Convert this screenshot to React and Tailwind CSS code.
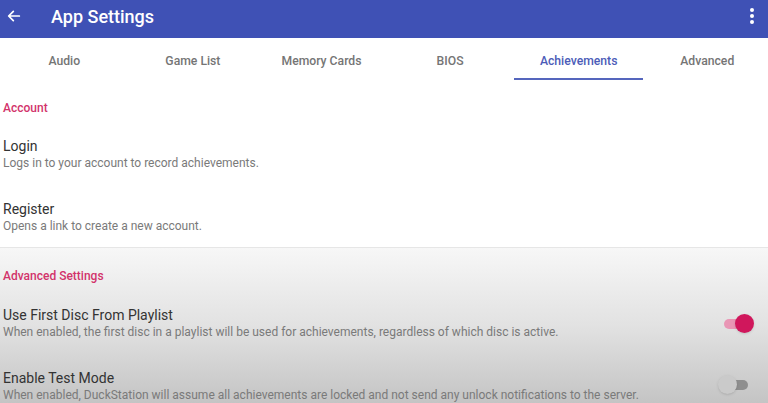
import React from 'react';

const tabs = ['Audio', 'Game List', 'Memory Cards', 'BIOS', 'Achievements', 'Advanced'];

function Toggle({ on }) {
    return (
        <div className="relative w-[24px] h-[20px] shrink-0">
            <div className={`absolute left-0 right-0 top-[5px] h-[10px] rounded-full ${on ? 'bg-[#e996b5]' : 'bg-[#8e8e8e]'}`}></div>
            <div className={`absolute top-0 w-[19px] h-[19px] rounded-full shadow-sm ${on ? 'right-[-6px] bg-[#d0175c]' : 'left-[-6px] bg-[#cacaca]'}`}></div>
        </div>
    );
}

function Pref({ title, summary, toggle, pt = 'pt-[22px]', tpt = 'pt-[30px]' }) {
    return (
        <div className="h-[63px] flex items-start justify-between pl-[3px] pr-[20px]">
            <div className={pt}>
                <div className="text-[14px] leading-[18px] text-[#333]">{title}</div>
                <div className="text-[12px] leading-[16px] text-[#7a7a7a]">{summary}</div>
            </div>
            {toggle !== undefined && (
                <div className={tpt}>
                    <Toggle on={toggle} />
                </div>
            )}
        </div>
    );
}

function Category({ label }) {
    return (
        <div className="pt-[20px] h-[37px] pl-[3px] text-[12px] leading-[16px] font-medium text-[#d2336b]">{label}</div>
    );
}

export default function App() {
    return (
        <div className="w-[768px] h-[403px] overflow-hidden bg-white font-['Roboto',sans-serif]">
            <div className="h-[38px] bg-[#3f51b5] flex items-center text-white">
                <svg width="16" height="16" viewBox="0 0 24 24" className="ml-[6px] mt-[-6px]" fill="none" stroke="white" strokeWidth="2.6" strokeLinecap="round" strokeLinejoin="round">
                    <path d="M20 12H5M11 5l-7 7 7 7" />
                </svg>
                <div className="ml-[29px] mt-[-6px] text-[18px] font-medium">App Settings</div>
                <div className="ml-auto mr-[14px] mt-[-6px] flex flex-col gap-[2px]">
                    <span className="w-[4px] h-[4px] rounded-full bg-white"></span>
                    <span className="w-[4px] h-[4px] rounded-full bg-white"></span>
                    <span className="w-[4px] h-[4px] rounded-full bg-white"></span>
                </div>
            </div>
            <div className="h-[42px] grid grid-cols-[repeat(6,128.6px)] bg-white">
                {tabs.map((t) => (
                    <div key={t} className={`flex items-center justify-center text-[12.2px] font-medium pt-[6px] border-b-2 ${t === 'Achievements' ? 'text-[#4c5cb8] border-[#5566bd]' : 'text-[#757575] border-transparent'}`}>
                        {t}
                    </div>
                ))}
            </div>
            <div className="bg-white">
                <Category label="Account" />
                <Pref title="Login" summary="Logs in to your account to record achievements." pt="pt-[20px]" />
                <Pref title="Register" summary="Opens a link to create a new account." pt="pt-[20px]" />
                <div className="h-[4px]"></div>
            </div>
            <div className="h-px bg-[#e6e6e6]"></div>
            <div className="h-[155px] bg-gradient-to-b from-[#f7f7f7] via-[#e2e2e2] to-[#c4c4c4]">
                <Category label="Advanced Settings" />
                <Pref title="Use First Disc From Playlist" summary="When enabled, the first disc in a playlist will be used for achievements, regardless of which disc is active." toggle={true} pt="pt-[21px]" tpt="pt-[29px]" />
                <Pref title="Enable Test Mode" summary="When enabled, DuckStation will assume all achievements are locked and not send any unlock notifications to the server." toggle={false} pt="pt-[21px]" tpt="pt-[27px]" />
            </div>
        </div>
    );
}
